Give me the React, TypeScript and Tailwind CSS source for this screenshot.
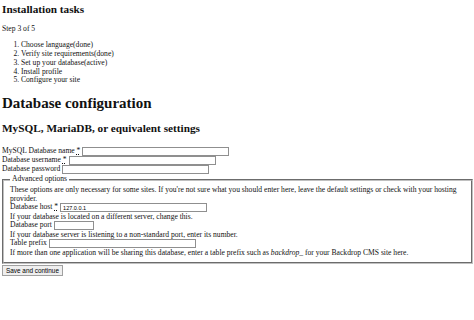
const steps = [
  "Choose language(done)",
  "Verify site requirements(done)",
  "Set up your database(active)",
  "Install profile",
  "Configure your site",
];

function Req() {
  return (
    <abbr title="This field is required." className="underline decoration-dotted">
      *
    </abbr>
  );
}

function TextInput({ width, value = "" }: { width: string; value?: string }) {
  return (
    <input
      type="text"
      defaultValue={value}
      className={`${width} h-[9px] border border-[#8f8f8f] bg-white px-[2px] font-['Liberation_Sans',sans-serif] text-[5.5px] leading-none text-black outline-none`}
    />
  );
}

export default function App() {
  return (
    <div className="min-h-[320px] bg-white pl-[2px] pr-[1px] pt-[3px] font-['Liberation_Serif',serif] text-[7.6px] leading-[8.8px] text-[#111]">
      {/* Tasks */}
      <h2 className="text-[11.25px] leading-[13px] font-bold">Installation tasks</h2>
      <p className="mt-[9px]">Step 3 of 5</p>
      <ol className="mt-[7.5px] list-decimal pl-[19px]">
        {steps.map((s) => (
          <li key={s}>{s}</li>
        ))}
      </ol>

      <h1 className="mt-[10px] text-[15px] leading-[17px] font-bold">Database configuration</h1>
      <h2 className="mt-[10px] text-[11.25px] leading-[13px] font-bold">
        MySQL, MariaDB, or equivalent settings
      </h2>

      {/* Form */}
      <form className="mt-[12px]">
        <div className="flex h-[8.7px] items-center gap-[2px]">
          <label>
            MySQL Database name <Req />
          </label>
          <TextInput width="w-[147px]" />
        </div>
        <div className="flex h-[8.7px] items-center gap-[2px]">
          <label>
            Database username <Req />
          </label>
          <TextInput width="w-[147px]" />
        </div>
        <div className="flex h-[8.7px] items-center gap-[2px]">
          <label>Database password</label>
          <TextInput width="w-[147px]" />
        </div>

        <fieldset
          className="mx-0 mt-[2px] border-2 border-[#c0c0c0] px-[6px] pt-[1px] pb-[5px]"
          style={{ borderStyle: "groove" }}
        >
          <legend className="px-[2px]">Advanced options</legend>
          <div className="leading-[9px]">
            These options are only necessary for some sites. If you're not sure what you should enter here, leave the
            default settings or check with your hosting provider.
          </div>
          <div className="flex h-[9px] items-center gap-[2px]">
            <label>
              Database host <Req />
            </label>
            <TextInput width="w-[147px]" value="127.0.0.1" />
          </div>
          <div className="leading-[9px]">If your database is located on a different server, change this.</div>
          <div className="flex h-[9px] items-center gap-[2px]">
            <label>Database port</label>
            <TextInput width="w-[40px]" />
          </div>
          <div className="leading-[9px]">
            If your database server is listening to a non-standard port, enter its number.
          </div>
          <div className="flex h-[9px] items-center gap-[2px]">
            <label>Table prefix</label>
            <TextInput width="w-[147px]" />
          </div>
          <div className="leading-[9px]">
            If more than one application will be sharing this database, enter a table prefix such as{" "}
            <em>backdrop_</em> for your Backdrop CMS site here.
          </div>
        </fieldset>

        <button
          type="button"
          className="mt-[1px] border border-[#a0a0a0] bg-[#efefef] px-[3px] py-[1px] font-['Liberation_Sans',sans-serif] text-[6.4px] leading-[7px] text-black"
        >
          Save and continue
        </button>
      </form>
    </div>
  );
}
